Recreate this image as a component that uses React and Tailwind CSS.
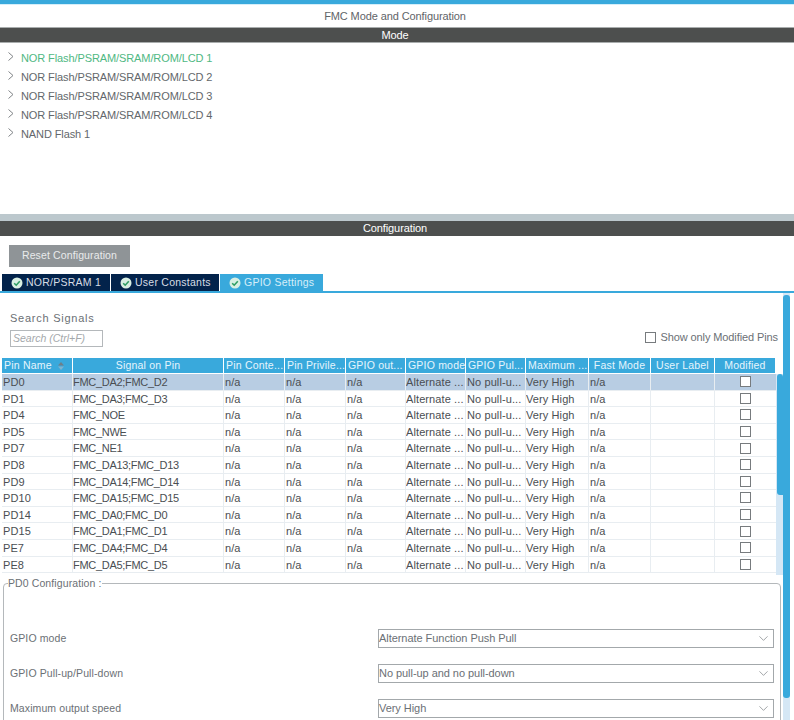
import React from "react";
import { ChevronDown } from "lucide-react";

const treeItems = [
  "NOR Flash/PSRAM/SRAM/ROM/LCD 1",
  "NOR Flash/PSRAM/SRAM/ROM/LCD 2",
  "NOR Flash/PSRAM/SRAM/ROM/LCD 3",
  "NOR Flash/PSRAM/SRAM/ROM/LCD 4",
  "NAND Flash 1",
];

const columns = [
  "Pin Conte...",
  "Pin Privile...",
  "GPIO out...",
  "GPIO mode",
  "GPIO Pul...",
  "Maximum ...",
];

const rows = [
  ["PD0", "FMC_DA2;FMC_D2"],
  ["PD1", "FMC_DA3;FMC_D3"],
  ["PD4", "FMC_NOE"],
  ["PD5", "FMC_NWE"],
  ["PD7", "FMC_NE1"],
  ["PD8", "FMC_DA13;FMC_D13"],
  ["PD9", "FMC_DA14;FMC_D14"],
  ["PD10", "FMC_DA15;FMC_D15"],
  ["PD14", "FMC_DA0;FMC_D0"],
  ["PD15", "FMC_DA1;FMC_D1"],
  ["PE7", "FMC_DA4;FMC_D4"],
  ["PE8", "FMC_DA5;FMC_D5"],
];

const gridCols =
  "grid grid-cols-[71px_151px_61px_61px_60px_60px_60px_63px_62px_64px_61px]";

function SectionBar({ title, className }) {
  return (
    <div
      className={`bg-[#4d4f4e] pr-[4px] text-center text-[11px] tracking-[-0.1px] text-white ${className}`}
    >
      {title}
    </div>
  );
}

function TabCheck() {
  return (
    <svg width="12" height="12" viewBox="0 0 12 12" className="shrink-0">
      <circle cx="6" cy="6" r="5.5" fill="#d9efe3" />
      <path d="M3.2 6.2 5.2 8.2 8.8 4.2" fill="none" stroke="#2f9e63" strokeWidth="1.6" />
    </svg>
  );
}

function Tab({ label, active, width }) {
  return (
    <div
      className={`h-[17px] flex items-center gap-[3px] pl-[9px] whitespace-nowrap text-[10.5px] tracking-[0.25px] ${width} ${
        active ? "bg-[#39a9dc] text-[#d5eef9]" : "bg-[#03234b] text-[#d7dde5]"
      }`}
    >
      <TabCheck />
      {label}
    </div>
  );
}

function HeaderCell({ children, sorted, left }) {
  return (
    <div
      className={`h-[15px] bg-[#39a9dc] text-[#e6f5fc] text-[10.5px] leading-[15px] tracking-[0.2px] whitespace-nowrap overflow-hidden mr-px flex items-center ${
        left ? "pl-[2px]" : "justify-center"
      }`}
    >
      {children}
      {sorted && (
        <svg width="6" height="8" viewBox="0 0 6 8" className="ml-[6px] shrink-0">
          <path d="M3 0 6 3.5H0Z" fill="#6f7f8a" />
          <path d="M0 4.5H6L3 8Z" fill="#7fb4d0" />
        </svg>
      )}
    </div>
  );
}

function Cell({ children, className = "pl-[1px] tracking-[0.1px]" }) {
  return (
    <div
      className={`border-r border-[#e8edf1] whitespace-nowrap overflow-hidden ${className}`}
    >
      {children}
    </div>
  );
}

function ConfigSelect({ label, value }) {
  return (
    <div className="flex items-center h-[19px] mb-[16px]">
      <div className="w-[369px] pl-[1px] text-[10.5px] tracking-[0.1px] text-[#6b7075]">{label}</div>
      <div className="w-[396px] h-[19px] border border-[#a3a8ab] flex items-center justify-between pr-[2px] text-[11px] tracking-[-0.05px] text-[#6b7075]">
        {value}
        <ChevronDown size={15} strokeWidth={1} className="text-[#6b7075]" />
      </div>
    </div>
  );
}

export default function App() {
  return (
    <div className="w-[794px] h-[720px] overflow-hidden bg-white font-['Liberation_Sans',Arial,sans-serif]">
      <div className="h-[4px] bg-[#39a9dc]" />
      <div className="h-[1px] bg-[#d5eef9]" />
      <div className="h-[22px] pt-[4px] pr-[4px] text-center text-[11px] leading-[14px] tracking-[-0.1px] text-[#5f6468]">
        FMC Mode and Configuration
      </div>
      <SectionBar title="Mode" className="h-[16px] border-y border-[#a9adad] leading-[14px]" />

      {/* Mode tree */}
      <div className="h-[171px] pt-[6px] pl-[8px]">
        {treeItems.map((item, i) => (
          <div key={item} className="h-[19px] flex items-center gap-[7px]">
            <svg width="6" height="10" viewBox="0 0 6 10" className="mb-[3px] shrink-0">
              <path d="M0.5 0.5 5 4.5 0.5 8.5" fill="none" stroke="#808487" />
            </svg>
            <span
              className={`text-[11px] tracking-[-0.1px] ${i === 0 ? "text-[#4fb883]" : "text-[#63676b]"}`}
            >
              {item}
            </span>
          </div>
        ))}
      </div>

      <div className="h-[7px] bg-[#bcc8cd]" />
      <SectionBar title="Configuration" className="h-[15px] leading-[15px]" />

      {/* Configuration */}
      <div className="h-[9px]" />
      <button className="ml-[9px] block w-[121px] h-[22px] bg-[#8f9497] text-[#e9ebec] text-[10.5px] tracking-[0.12px]">
        Reset Configuration
      </button>
      <div className="h-[7px]" />
      <div className="flex pl-[2px] gap-px">
        <Tab label="NOR/PSRAM 1" width="w-[108px]" />
        <Tab label="User Constants" width="w-[108px]" />
        <Tab label="GPIO Settings" width="w-[103px]" active />
      </div>
      <div className="h-[2px] bg-[#39a9dc]" />

      <div className="flex">
        <div className="w-[783px]">
          <div className="h-[65px] pl-[10px] pr-[5px] flex justify-between text-[#6b7075]">
            <div className="pt-[18px]">
              <div className="text-[11px] leading-[14px] tracking-[0.75px]">Search Signals</div>
              <div className="mt-[5px] w-[93px] h-[17px] border border-[#b4b8bb] pl-[2px] text-[10.5px] leading-[15px] italic text-[#a4a8ab]">
                Search (Ctrl+F)
              </div>
            </div>
            <label className="flex items-center gap-[4px] h-[14px] mt-[37px] text-[11px] tracking-[-0.1px]">
              <span className="w-[11px] h-[11px] border border-[#777b7e] bg-white" />
              Show only Modified Pins
            </label>
          </div>

          {/* Pin table */}
          <div className={`${gridCols} pl-[2px] h-[16px]`}>
            <HeaderCell left sorted>
              Pin Name
            </HeaderCell>
            <HeaderCell>Signal on Pin</HeaderCell>
            {columns.map((c) => (
              <HeaderCell key={c} left>
                {c}
              </HeaderCell>
            ))}
            <HeaderCell>Fast Mode</HeaderCell>
            <HeaderCell>User Label</HeaderCell>
            <HeaderCell>Modified</HeaderCell>
          </div>
          <div className="h-[201px] overflow-hidden flex">
            <div className="w-[776px] pl-[2px] shrink-0">
              {rows.map(([pin, signal], i) => (
                <div
                  key={pin}
                  className={`${gridCols} h-[16.6px] items-stretch border-b border-[#e8edf1] text-[11px] leading-[17px] text-[#4a4e52] ${
                    i === 0 ? "bg-[#b8cde3]" : "bg-white"
                  }`}
                >
                  <Cell>{pin}</Cell>
                  <Cell className="tracking-[-0.3px]">{signal}</Cell>
                  <Cell>n/a</Cell>
                  <Cell>n/a</Cell>
                  <Cell>n/a</Cell>
                  <Cell className="tracking-[0.1px]">Alternate ...</Cell>
                  <Cell>No pull-u...</Cell>
                  <Cell className="tracking-[0.1px]">Very High</Cell>
                  <Cell>n/a</Cell>
                  <Cell />
                  <div className="flex items-center justify-center">
                    <span className="w-[11px] h-[11px] border border-[#777b7e] bg-white" />
                  </div>
                </div>
              ))}
            </div>
            <div className="w-[7px] bg-[#d5e7f5] flex justify-end">
              <div className="w-[6px] h-[121px] rounded-t-[3px] rounded-bl-[3px] bg-[#39a9dc]" />
            </div>
          </div>

          {/* PD0 configuration */}
          <fieldset className="mt-[1px] ml-[3px] w-[778px] h-[200px] border border-[#b4b8bb] rounded-[4px] pl-[5px] pt-[39px]">
            <legend className="-ml-[1px] text-[10.5px] leading-[14px] tracking-[0.1px] text-[#6b7075]">
              PD0 Configuration :
            </legend>
            <ConfigSelect label="GPIO mode" value="Alternate Function Push Pull" />
            <ConfigSelect label="GPIO Pull-up/Pull-down" value="No pull-up and no pull-down" />
            <ConfigSelect label="Maximum output speed" value="Very High" />
          </fieldset>
        </div>

        {/* Outer scrollbar */}
        <div className="w-[7px] h-[427px] bg-[#d5e7f5]">
          <div className="mt-[2px] h-[403px] rounded-[3px] bg-[#39a9dc]" />
        </div>
      </div>
    </div>
  );
}
